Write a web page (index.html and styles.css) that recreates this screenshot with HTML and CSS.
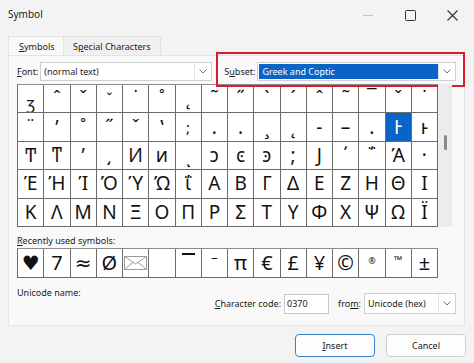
FILE: index.html
```html
<!DOCTYPE html>
<html lang="en">
<head>
  <meta charset="UTF-8" />
  <title>Symbol</title>
  <link rel="stylesheet" href="styles.css">
</head>
<body>
  <div class="dialog">
    <div class="titlebar">
      <span class="title">Symbol</span>
      <div class="controls">
        <span class="ctl"><svg width="10" height="10" viewBox="0 0 10 10"><path d="M0 5.5h10" stroke="#c4c4c4" stroke-width="1"/></svg></span>
        <span class="ctl"><svg width="11" height="11" viewBox="0 0 11 11"><rect x="0.5" y="0.5" width="10" height="10" rx="1" fill="none" stroke="#333" stroke-width="1"/></svg></span>
        <span class="ctl"><svg width="11" height="11" viewBox="0 0 11 11"><path d="M0.5 0.5l10 10M10.5 0.5l-10 10" stroke="#333" stroke-width="1.1"/></svg></span>
      </div>
    </div>

    <div class="tabs">
      <div class="tab active"><u>S</u>ymbols</div>
      <div class="tab">S<u>p</u>ecial Characters</div>
    </div>

    <div class="panel">
      <div class="pick-row">
        <span class="lbl"><u>F</u>ont:</span>
        <div class="select font-select">
          <span class="value">(normal text)</span>
          <span class="arrow"><svg width="8" height="5" viewBox="0 0 8 5"><path d="M0.5 0.5l3.5 3.5l3.5-3.5" fill="none" stroke="#777"/></svg></span>
        </div>
        <div class="subset">
          <span class="lbl">S<u>u</u>bset:</span>
          <div class="select subset-select">
            <span class="value hl">Greek and Coptic</span>
            <span class="arrow"><svg width="8" height="5" viewBox="0 0 8 5"><path d="M0.5 0.5l3.5 3.5l3.5-3.5" fill="none" stroke="#777"/></svg></span>
          </div>
        </div>
      </div>
      <div class="mark"></div>

      <div class="grid-wrap">
        <div class="grid">
          <span class="c low">ʒ</span><span class="c">ˆ</span><span class="c">ˇ</span><span class="c sm">ˇ</span><span class="c">˙</span><span class="c">˚</span><span class="c">˛</span><span class="c">˜</span><span class="c">˝</span><span class="c">ˋ</span><span class="c">ˊ</span><span class="c">ˆ</span><span class="c">˜</span><span class="c">¯</span><span class="c">ˇ</span><span class="c">˙</span>
          <span class="c">¨</span><span class="c">ʼ</span><span class="c">˚</span><span class="c">˝</span><span class="c">ˇ</span><span class="c">ʽ</span><span class="c sm">;</span><span class="c">.</span><span class="c">.</span><span class="c">¸</span><span class="c">˛</span><span class="c">-</span><span class="c">–</span><span class="c">.</span><span class="c sel">Ͱ</span><span class="c">ͱ</span>
          <span class="c">Ͳ</span><span class="c">ͳ</span><span class="c">ʹ</span><span class="c">͵</span><span class="c">Ͷ</span><span class="c">ͷ</span><span class="c">ͺ</span><span class="c">ͻ</span><span class="c">ͼ</span><span class="c">ͽ</span><span class="c">;</span><span class="c">Ϳ</span><span class="c">΄</span><span class="c">΅</span><span class="c">Ά</span><span class="c">·</span>
          <span class="c">Έ</span><span class="c">Ή</span><span class="c">Ί</span><span class="c">Ό</span><span class="c">Ύ</span><span class="c">Ώ</span><span class="c">ΐ</span><span class="c">Α</span><span class="c">Β</span><span class="c">Γ</span><span class="c">Δ</span><span class="c">Ε</span><span class="c">Ζ</span><span class="c">Η</span><span class="c">Θ</span><span class="c">Ι</span>
          <span class="c">Κ</span><span class="c">Λ</span><span class="c">Μ</span><span class="c">Ν</span><span class="c">Ξ</span><span class="c">Ο</span><span class="c">Π</span><span class="c">Ρ</span><span class="c">Σ</span><span class="c">Τ</span><span class="c">Υ</span><span class="c">Φ</span><span class="c">Χ</span><span class="c">Ψ</span><span class="c">Ω</span><span class="c">Ϊ</span>
        </div>
        <div class="scrollbar"><div class="thumb"></div></div>
      </div>

      <div class="lbl recent-label"><u>R</u>ecently used symbols:</div>
      <div class="recent">
        <span class="c">♥</span><span class="c">7</span><span class="c">≈</span><span class="c">Ø</span>
        <span class="c"><svg width="23" height="14" viewBox="0 0 23 14"><rect x="0.5" y="0.5" width="22" height="13" fill="#fff" stroke="#9a9a9a"/><path d="M0.5 0.5L11.5 8L22.5 0.5M0.5 13.5L9 6.3M22.5 13.5L14 6.3" fill="none" stroke="#9a9a9a"/></svg></span>
        <span class="c"></span><span class="c bar-top"><i class="bar"></i></span><span class="c">⁻</span>
        <span class="c">π</span><span class="c">€</span><span class="c">£</span><span class="c">¥</span><span class="c">©</span><span class="c tiny">®</span><span class="c tiny tm">™</span><span class="c">±</span>
      </div>

      <div class="info-row">
        <span class="lbl">Unicode name:</span>
        <div class="code">
          <span class="lbl"><u>C</u>haracter code:</span>
          <span class="input">0370</span>
          <span class="lbl from">fro<u>m</u>:</span>
          <div class="select from-select">
            <span class="value">Unicode (hex)</span>
            <span class="arrow"><svg width="8" height="5" viewBox="0 0 8 5"><path d="M0.5 0.5l3.5 3.5l3.5-3.5" fill="none" stroke="#777"/></svg></span>
          </div>
        </div>
      </div>
    </div>

    <div class="footer">
      <button class="btn default"><u>I</u>nsert</button>
      <button class="btn">Cancel</button>
    </div>
  </div>
</body>
</html>
```

FILE: styles.css
```css
body {
  margin: 0;
  background: #f0f0f0;
  font-family: 'Noto Sans', 'DejaVu Sans', sans-serif;
  font-size: 9px;
  color: #1a1a1a;
}
.dialog {
  width: 474px;
  height: 363px;
  background: #f3f3f3;
  overflow: hidden;
}
.titlebar {
  height: 35px;
  display: flex;
  align-items: flex-start;
}
.title {
  padding: 7px 0 0 8px;
  font-size: 10px;
}
.controls {
  margin-left: auto;
  display: flex;
  padding-right: 1px;
}
.ctl {
  width: 42px;
  height: 30px;
  display: flex;
  align-items: center;
  justify-content: center;
  padding-bottom: 2px;
}
.tabs {
  display: flex;
  align-items: flex-end;
  padding-left: 8px;
  height: 20px;
}
.tab {
  height: 18px;
  padding: 0 9px;
  display: flex;
  align-items: center;
  background: #f0f0f0;
  border: 1px solid #e3e3e3;
  border-bottom: none;
  border-left: none;
}
.tab.active {
  height: 20px;
  width: 56px;
  box-sizing: border-box;
  background: #f9f9f9;
  border-left: 1px solid #e3e3e3;
  padding: 0 10px;
  margin-bottom: -1px;
  position: relative;
}
.panel {
  position: relative;
  margin-left: 8px;
  width: 457px;
  height: 271px;
  box-sizing: border-box;
  background: #f9f9f9;
  border: 1px solid #e3e3e3;
  padding: 6px 0 0 8px;
}
.pick-row {
  display: flex;
  align-items: center;
  height: 19px;
}
.lbl {
  white-space: nowrap;
}
.select {
  display: flex;
  height: 19px;
  box-sizing: border-box;
  background: #fff;
  border: 1px solid #cfcfcf;
}
.select .value {
  flex: 1;
  padding-left: 3px;
  line-height: 17px;
  white-space: nowrap;
  overflow: hidden;
}
.select .arrow {
  width: 16px;
  border-left: 1px solid #e4e4e4;
  display: flex;
  align-items: center;
  justify-content: center;
}
.font-select {
  width: 172px;
  margin-left: 2px;
}
.subset {
  display: flex;
  align-items: center;
  margin-left: 12px;
}
.subset-select {
  width: 199px;
  margin-left: 2px;
  padding: 1px 0 1px 1px;
}
.subset-select .value.hl {
  background: #0a64c8;
  color: #fff;
  line-height: 15px;
}
.mark {
  position: absolute;
  left: 207px;
  top: -4px;
  width: 249px;
  height: 35px;
  box-sizing: border-box;
  border: 2px solid #d9202a;
}
.grid-wrap {
  display: flex;
  margin-top: 3px;
}
.grid, .recent {
  display: grid;
  grid-template-columns: repeat(16, 1fr);
  width: 421px;
  box-sizing: border-box;
  border-top: 1px solid #8c8c8c;
  border-left: 1px solid #6a6a6a;
  background: #fff;
}
.grid {
  grid-template-rows: repeat(5, 1fr);
  height: 143px;
}
.c {
  display: flex;
  align-items: center;
  justify-content: center;
  border-right: 1px solid #6a6a6a;
  border-bottom: 1px solid #6a6a6a;
  font-size: 19px;
  line-height: 1;
  color: #111;
  overflow: hidden;
}
.c.low {
  padding-top: 8px;
  font-size: 17px;
}
.c.sm {
  font-size: 15px;
}
.c.tiny {
  font-size: 9px;
  align-items: flex-start;
  padding-top: 7px;
}
.c.tiny.tm {
  font-size: 11px;
  padding-top: 5px;
}
.c.sel {
  background: #0a64c8;
  color: #fff;
}
.scrollbar {
  width: 14px;
  height: 143px;
  background: #ececec;
  position: relative;
}
.thumb {
  position: absolute;
  left: 6px;
  top: 51px;
  width: 3px;
  height: 15px;
  background: #8a8a8a;
  border-radius: 2px;
}
.recent-label {
  margin-top: 7px;
  height: 14px;
  line-height: 14px;
}
.recent {
  margin-top: 0;
  height: 30px;
}
.recent .c {
  font-size: 20px;
}
.recent .c.tiny {
  font-size: 9px;
}
.recent .c.tiny.tm {
  font-size: 11px;
}
.c.bar-top {
  align-items: flex-start;
  padding-top: 4px;
}
.bar {
  display: block;
  width: 13px;
  height: 2px;
  background: #111;
}
.info-row {
  display: flex;
  margin-top: 8px;
  line-height: 14px;
}
.code {
  margin-left: auto;
  margin-top: 7px;
  margin-right: 8px;
  display: flex;
  align-items: center;
}
.input {
  width: 45px;
  height: 20px;
  box-sizing: border-box;
  margin-left: 3px;
  background: #fff;
  border: 1px solid #c8c8c8;
  padding-left: 2px;
  line-height: 18px;
}
.from {
  margin-left: 9px;
}
.from-select {
  width: 92px;
  height: 21px;
  margin-left: 3px;
}
.from-select .value {
  line-height: 19px;
}
.footer {
  display: flex;
  justify-content: flex-end;
  gap: 11px;
  padding: 8px 8px 0 0;
}
.btn {
  width: 80px;
  height: 23px;
  font-family: inherit;
  font-size: 9px;
  color: #1a1a1a;
  background: #fdfdfd;
  border: 1px solid #d0d0d0;
  border-radius: 4px;
  padding: 0;
}
.btn.default {
  border-color: #3b7fc4;
}
```
